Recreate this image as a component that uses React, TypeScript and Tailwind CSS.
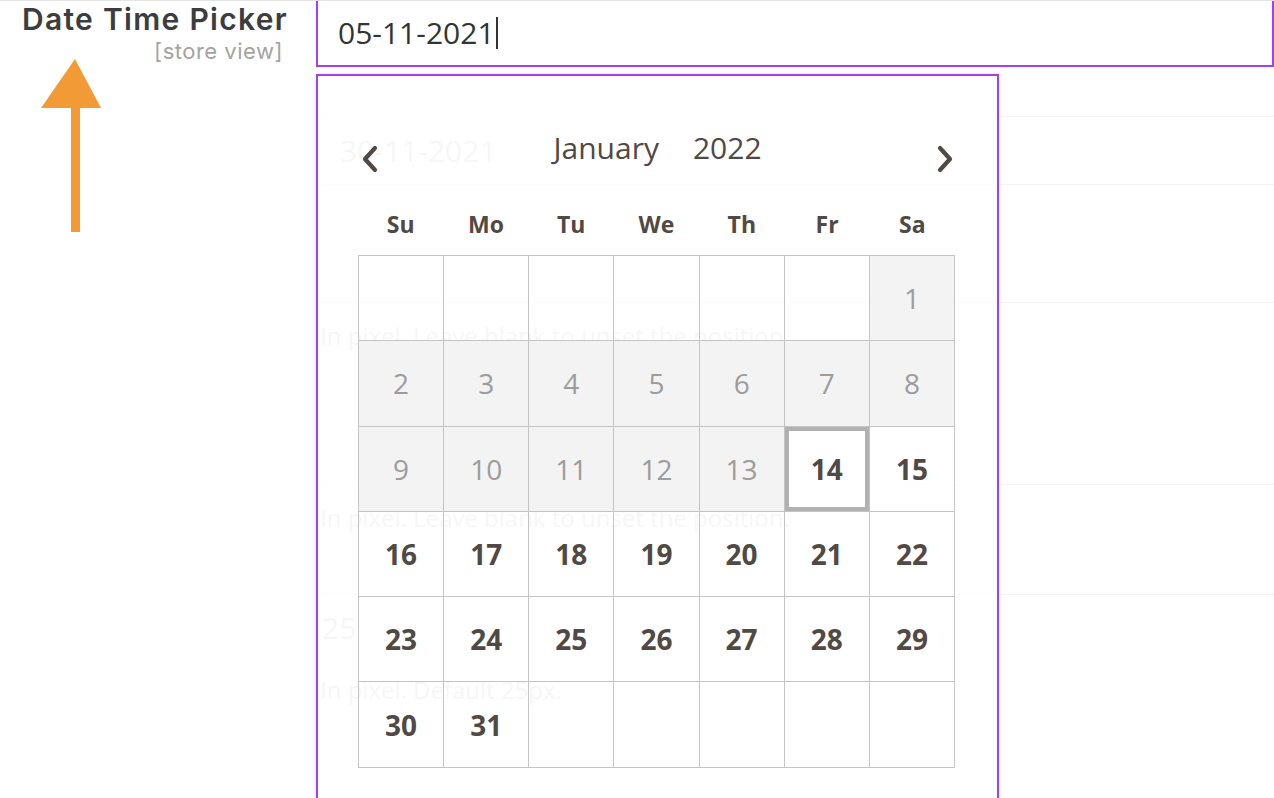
import React from 'react';

const purple = 'border-[#a142ee]';

const days = ['Su', 'Mo', 'Tu', 'We', 'Th', 'Fr', 'Sa'];

type Cell = { n?: number; off?: boolean; today?: boolean };

const buildCells = (): Cell[] => {
  const cells: Cell[] = [];
  for (let i = 0; i < 6; i++) cells.push({});
  for (let d = 1; d <= 31; d++) {
    cells.push({ n: d, off: d < 14, today: d === 14 });
  }
  while (cells.length < 42) cells.push({});
  return cells;
};

const Chevron = ({ dir }: { dir: 'left' | 'right' }) => (
  <svg width="20" height="28" viewBox="0 0 20 28" className="translate-y-[11px]">
    <path
      d={dir === 'left' ? 'M15 3 L5 14 L15 25' : 'M5 3 L15 14 L5 25'}
      fill="none"
      stroke="#514943"
      strokeWidth="4.2"
      strokeLinecap="round"
      strokeLinejoin="round"
    />
  </svg>
);

const Arrow = () => (
  <svg width="62" height="176" viewBox="0 0 62 176" className="self-start ml-[41px] mt-[-4px]">
    <polygon points="34,1 0,50 60,50" fill="#f29a36" />
    <rect x="30" y="48" width="9" height="126" fill="#f29a36" />
  </svg>
);

const GhostRow = ({ h, text, line = true }: { h: string; text?: string; line?: boolean }) => (
  <div className={`${h} flex items-center pl-[4px] text-[24px] text-[#dcdcdc] ${line ? 'border-b border-[#f4f4f4]' : ''}`}>
    {text}
  </div>
);

const App = () => {
  const cells = buildCells();

  return (
    <div
      className="h-screen w-full overflow-hidden bg-white border-t border-[#e4e4e4] flex"
      style={{ fontFamily: '"Open Sans", "Noto Sans", sans-serif' }}
    >
      {/* label column */}
      <div className="w-[316px] shrink-0 flex flex-col items-end pr-[28px]">
        <div
          className="text-[30px] font-semibold leading-none text-[#3d3d3d] mt-[3px] tracking-[1.3px]"
          style={{ fontFamily: 'Inter, "Noto Sans", sans-serif' }}
        >
          Date Time Picker
        </div>
        <div
          className="text-[22px] leading-none text-[#a3a3a3] mt-[6px] mr-[5px] tracking-[0.5px]"
          style={{ fontFamily: 'Inter, "Noto Sans", sans-serif' }}
        >
          [store view]
        </div>
        <Arrow />
      </div>

      {/* field column */}
      <div className="relative flex-1">
        <div className={`h-[67px] -mt-px border-2 border-t-0 ${purple} flex items-center pl-[20px]`}>
          <span className="text-[30px] text-[#333333] leading-none">05-11-2021</span>
          <span className="w-[2px] h-[32px] bg-[#333333] ml-[1px]" />
        </div>

        {/* form rows behind the popup */}
        <div className="flex flex-col">
          <GhostRow h="h-[50px]" />
          <div className="h-[68px] flex items-center pl-[24px] text-[30px] text-[#dcdcdc] border-b border-[#f4f4f4]">
            30-11-2021
          </div>
          <GhostRow h="h-[118px]" />
          <GhostRow h="h-[66px]" text="In pixel. Leave blank to unset the position." line={false} />
          <GhostRow h="h-[116px]" />
          <GhostRow h="h-[66px]" text="In pixel. Leave blank to unset the position." line={false} />
          <GhostRow h="h-[44px]" />
          <div className="h-[64px] flex items-center pl-[6px] text-[30px] text-[#dcdcdc]">25</div>
          <GhostRow h="h-[62px]" text="In pixel. Default 25px." line={false} />
        </div>

        {/* calendar popup */}
        <div
          className={`absolute left-0 top-[73px] w-[683px] h-[760px] border-2 ${purple} bg-white/[0.75] shadow-[0_0_4px_rgba(0,0,0,0.12)]`}
        >
          <div className="mt-[52px] h-[40px] flex items-center justify-between pl-[42px] pr-[42px]">
            <Chevron dir="left" />
            <div className="flex items-center gap-[34px] text-[30px] text-[#514943] leading-none">
              <span>January</span>
              <span>2022</span>
            </div>
            <Chevron dir="right" />
          </div>

          <div className="ml-[40px] w-[597px] mt-[41px] h-[30px] grid grid-cols-7 items-center">
            {days.map((d) => (
              <div key={d} className="text-center text-[23px] font-bold text-[#514943] leading-none">
                {d}
              </div>
            ))}
          </div>

          <div className="ml-[40px] mt-[16px] w-[597px] grid grid-cols-7 border-l border-t border-[#c4c4c4]">
            {cells.map((c, i) => (
              <div
                key={i}
                className={`h-[85.3px] border-r border-b border-[#c4c4c4] flex items-center justify-center text-[28px] leading-none ${
                  c.off ? 'bg-[#f3f3f3] text-[#9c9c9c]' : 'text-[#514943] font-bold'
                } ${c.today ? 'bg-white shadow-[inset_0_0_0_4px_#b1b1b1]' : ''}`}
              >
                {c.n}
              </div>
            ))}
          </div>
        </div>
      </div>
    </div>
  );
};

export default App;
